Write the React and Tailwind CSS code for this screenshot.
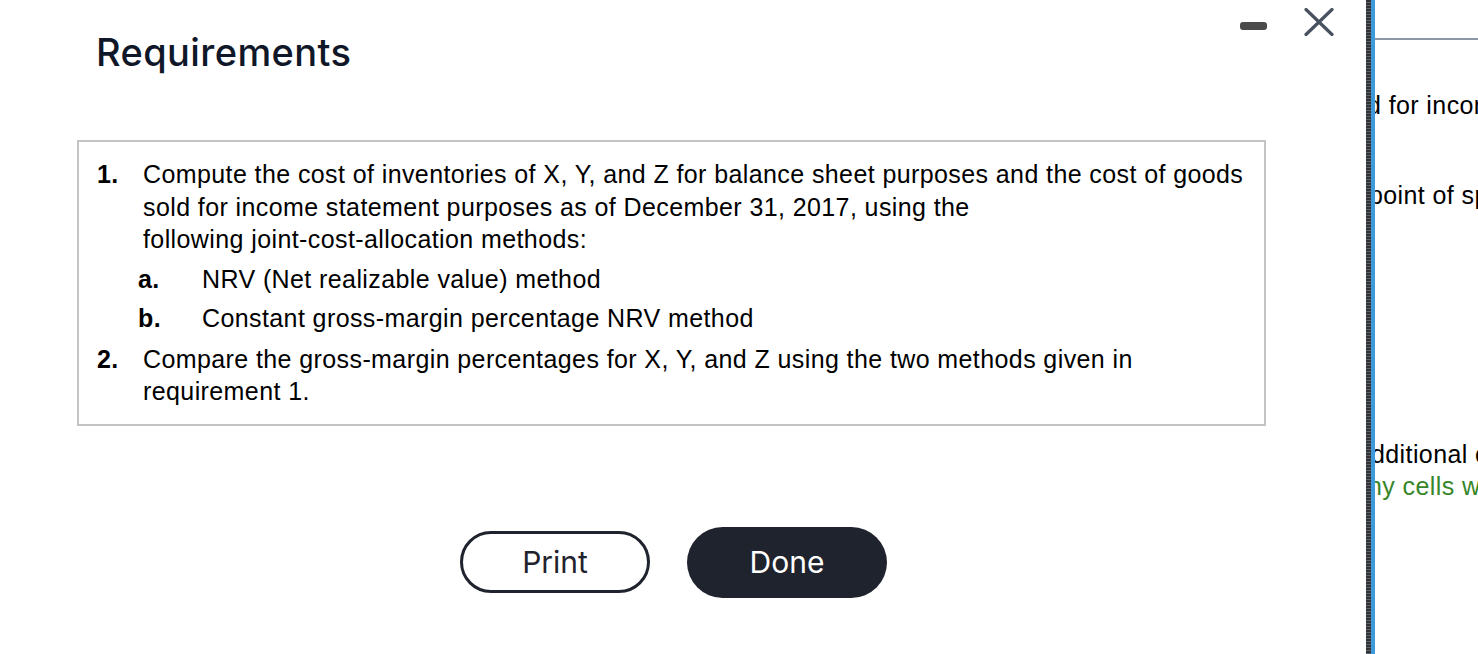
export default function App() {
  const font = { fontFamily: '"Liberation Sans", Arial, sans-serif' };
  const uiFont = { fontFamily: 'Inter, "Liberation Sans", Arial, sans-serif' };

  return (
    <div className="flex h-[654px] w-[1478px] overflow-hidden bg-white" style={font}>
      {/* Modal */}
      <div className="flex w-[1366px] shrink-0 flex-col">
        {/* Header */}
        <div className="flex h-[113px] items-start">
          <h1 className="ml-[96px] mt-[32px] text-[38px] font-medium leading-[40px] tracking-[0.4px] text-[#0f1729]" style={uiFont}>
            Requirements
          </h1>
          <div className="ml-auto mr-[32px] mt-[8px] flex items-start gap-[37px]">
            <div className="mt-[14px] h-[8px] w-[27px] rounded-[3px] bg-[#4b4b4b]" />
            <svg width="30" height="28" viewBox="0 0 30 28" className="text-[#485160]">
              <path d="M2 1.5 L28 26.5 M28 1.5 L2 26.5" stroke="currentColor" strokeWidth="3.2" strokeLinecap="round" />
            </svg>
          </div>
        </div>

        {/* Requirements box */}
        <div className="ml-[77px] mt-[27px] w-[1189px] border-2 border-[#c4c4c4] pb-[16px] pl-[18px] pr-[10px] pt-[16px] text-[25px] leading-[32.5px] tracking-[0.4px] text-black">
          <div className="flex">
            <span className="w-[46px] shrink-0 font-bold">1.</span>
            <div>
              <p>
                Compute the cost of inventories of X, Y, and Z for balance sheet purposes and the cost of goods
                <br />
                sold for income statement purposes as of December 31, 2017, using the
                <br />
                following joint-cost-allocation methods:
              </p>
              <div className="mt-[7px] flex">
                <span className="ml-[-5px] w-[64px] shrink-0 font-bold">a.</span>
                <span>NRV (Net realizable value) method</span>
              </div>
              <div className="mt-[7px] flex">
                <span className="ml-[-5px] w-[64px] shrink-0 font-bold">b.</span>
                <span>Constant gross-margin percentage NRV method</span>
              </div>
            </div>
          </div>
          <div className="mt-[8px] flex">
            <span className="w-[46px] shrink-0 font-bold">2.</span>
            <p>
              Compare the gross-margin percentages for X, Y, and Z using the two methods given in
              <br />
              requirement 1.
            </p>
          </div>
        </div>

        {/* Buttons */}
        <div className="ml-[77px] mt-[101px] flex w-[1189px] items-center justify-center gap-[37px] pl-[4px]" style={uiFont}>
          <button className="h-[62px] w-[190px] rounded-full border-[3px] border-[#1f232d] bg-white text-[30px] text-[#1f232d]">
            Print
          </button>
          <button className="h-[71px] w-[200px] rounded-full bg-[#1f232d] text-[30px] text-white">
            Done
          </button>
        </div>
      </div>

      {/* Divider strip */}
      <div className="w-[5px] shrink-0 bg-[#333] bg-[repeating-linear-gradient(to_bottom,#333_0px,#333_2px,#5a6470_2px,#5a6470_3px)]" />
      <div className="w-[4px] shrink-0 bg-[#3f9adb]" />

      {/* Background page */}
      <div className="flex flex-1 flex-col overflow-hidden text-[25px] leading-[28px] tracking-[0.4px] text-black">
        <div className="mt-[38px] h-[2px] w-full bg-[#8c97a6]" />
        <div className="mt-[51px] ml-[-8px] whitespace-nowrap">d for income</div>
        <div className="mt-[62px] ml-[-6px] whitespace-nowrap">point of spl</div>
        <div className="mt-[231px] ml-[-4px] whitespace-nowrap">dditional co</div>
        <div className="mt-[4px] ml-[-7px] whitespace-nowrap text-[#38862a]">ny cells wi</div>
      </div>
    </div>
  );
}
